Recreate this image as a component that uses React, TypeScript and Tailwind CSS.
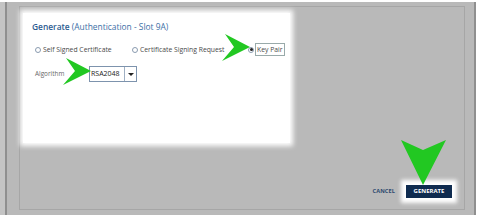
import React from 'react'

const font = { fontFamily: '"Open Sans", "Noto Sans", sans-serif' }

function Radio({ checked }: { checked?: boolean }) {
  return (
    <span className="inline-flex w-[6px] h-[6px] rounded-full border border-[#8a9bb0] bg-white items-center justify-center shrink-0">
      {checked && <span className="w-[3px] h-[3px] rounded-full bg-[#222]" />}
    </span>
  )
}

// Green callout arrow, tip on the right
function ArrowRight({ className }: { className: string }) {
  return (
    <svg className={className} width="30" height="28" viewBox="0 0 30 28">
      <polygon points="3,0 28,13 0,27 12,13" fill="#22c822" />
    </svg>
  )
}

function ArrowDown({ className }: { className: string }) {
  return (
    <svg className={className} width="46" height="46" viewBox="0 0 46 46">
      <polygon points="0,0 22,10 45,0 22,45" fill="#22c822" />
    </svg>
  )
}

export default function App() {
  return (
    <div className="w-[480px] h-[218px] bg-white pt-[2px] pr-[4px] pb-[3px] flex" style={font}>
      <div className="w-[7px] bg-[#c4c4c4] border-r-2 border-[#8f8f8f]" />
      <div className="flex-1 bg-[#b9b9b9] border-r-2 border-[#8f8f8f] pl-[12px] pt-[4px] pr-[9px] pb-[5px] flex">
        <div className="flex-1 border border-[#a6a6a6] relative flex flex-col pl-[3px] pt-[6px] pr-[12px] pb-[11px]">
          <div className="w-[267px] h-[130px] bg-white shadow-[0_0_5px_3px_#ffffff] pl-[9px] pt-[8px]">
            <div className="text-[8.4px] leading-[12px] text-[#3b6fa6]">
              <span className="font-semibold text-[#2d5c91]">Generate</span>
              <span> (Authentication - Slot 9A)</span>
            </div>
            <div className="flex items-center mt-[10px] text-[6.8px] text-[#4a4a4a] leading-[12px]">
              <div className="flex items-center gap-[2px] w-[100px] pl-[3px]">
                <Radio />
                <span>Self Signed Certificate</span>
              </div>
              <div className="flex items-center gap-[2px] w-[116px]">
                <Radio />
                <span>Certificate Signing Request</span>
              </div>
              <div className="flex items-center gap-[1px]">
                <Radio checked />
                <span className="border border-[#9aa] px-[1px] h-[13px] leading-[11px]">Key Pair</span>
              </div>
            </div>
            <div className="flex items-center mt-[10px] pl-[3px]">
              <span className="text-[6.4px] text-[#666] w-[54px]">Algorithm</span>
              <div className="flex h-[16px] border border-[#7d93ad] bg-white">
                <span className="w-[35px] text-[7px] leading-[14px] pl-[1px] text-[#222] border-r border-[#9fb0c4]">RSA2048</span>
                <span className="w-[11px] flex items-center justify-center">
                  <span className="w-0 h-0 border-l-[3px] border-r-[3px] border-t-[3px] border-l-transparent border-r-transparent border-t-[#222]" />
                </span>
              </div>
            </div>
          </div>
          <div className="mt-auto flex items-center justify-end gap-[11px]">
            <span className="text-[5.6px] font-bold text-[#2d4a6e] tracking-[0.1px]">CANCEL</span>
            <div className="shadow-[0_0_4px_5px_#ffffff]">
              <div className="w-[46px] h-[13px] bg-[#0f2b4f] text-white text-[6px] font-bold flex items-center justify-center">GENERATE</div>
            </div>
          </div>
          <ArrowRight className="absolute left-[202px] top-[27px]" />
          <ArrowRight className="absolute left-[43px] top-[51px]" />
          <ArrowDown className="absolute left-[381px] top-[133px]" />
        </div>
      </div>
    </div>
  )
}
